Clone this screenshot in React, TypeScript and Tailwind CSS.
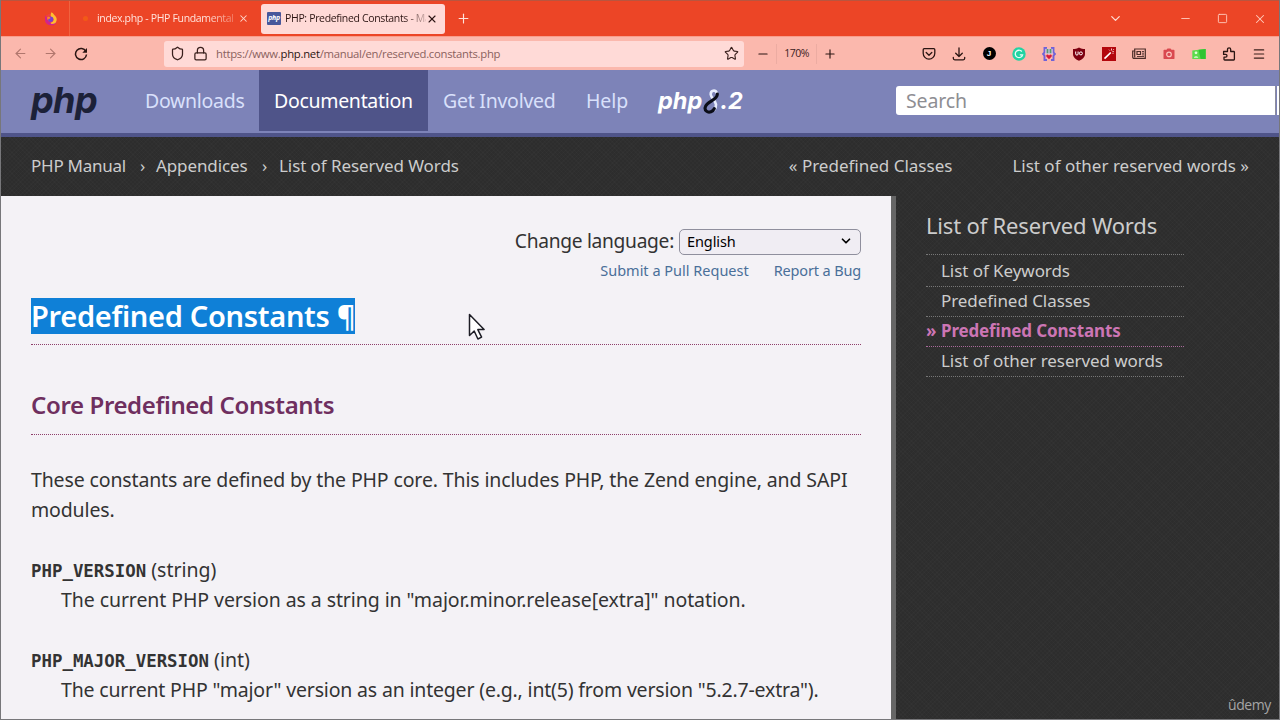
import type { ReactNode } from 'react';
import {
  ArrowLeft,
  ArrowRight,
  ChevronDown,
  Lock,
  Menu,
  Minus,
  Plus,
  Shield,
  Square,
  Star,
  X,
} from 'lucide-react';

const sidebarLinks = [
  { label: 'List of Keywords' },
  { label: 'Predefined Classes' },
  { label: 'Predefined Constants', current: true },
  { label: 'List of other reserved words' },
];

function FirefoxLogo() {
  return (
    <svg width="14" height="14" viewBox="0 0 14 14">
      <circle cx="7" cy="7.4" r="6" fill="#f0413f" />
      <path d="M1 7a6 6 0 0 0 11.6 2.4C10 12.5 3.5 11.5 3.3 5.5 2 5 1.3 4 2 2.5 1.2 4 .9 5.5 1 7z" fill="#d3238b" />
      <path d="M7.5.3C10 1.5 9.8 3 11 3.8c1.8 1.5 2.4 4.5.6 7C10 12.5 7 12 6.5 11 11 9.5 10 5 7 5c-.5-1.5-.3-3.5.5-4.7z" fill="#ffbd30" />
      <circle cx="6.6" cy="7.3" r="2.7" fill="#7a3fd0" />
      <path d="M3.3 5.3c1.2-.8 2.2-.5 3.3.6-.6.8-1.5.6-2 .9-.5.5-.3 1.2 0 1.7-1.2-.5-1.7-2-1.3-3.2z" fill="#ff8a1e" />
    </svg>
  );
}

function Reload() {
  return (
    <svg width="14" height="14" viewBox="0 0 14 14" fill="none" stroke="#2a1512" strokeWidth="1.5">
      <path d="M11.9 4.5A5.5 5.5 0 1 0 12.5 7.5" />
      <path d="M13 1v4.7H8.3z" fill="#2a1512" stroke="none" />
    </svg>
  );
}

function Pocket() {
  return (
    <svg width="14" height="14" viewBox="0 0 14 14" fill="none" stroke="#2a1512" strokeWidth="1.3" strokeLinecap="round" strokeLinejoin="round">
      <path d="M2.2 1.7h9.6c.6 0 1 .4 1 1v3.6a5.8 5.8 0 0 1-11.6 0V2.7c0-.6.4-1 1-1z" />
      <path d="M4.2 5.5 7 8.2l2.8-2.7" />
    </svg>
  );
}

function Download() {
  return (
    <svg width="14" height="14" viewBox="0 0 14 14" fill="none" stroke="#2a1512" strokeWidth="1.3" strokeLinecap="round" strokeLinejoin="round">
      <path d="M7 1v8.5M3.7 6.3 7 9.5l3.3-3.2M1.3 10.5v.8c0 .9.6 1.5 1.5 1.5h8.4c.9 0 1.5-.6 1.5-1.5v-.8" />
    </svg>
  );
}

function Grammarly() {
  return (
    <svg width="14" height="14" viewBox="0 0 14 14" fill="none">
      <circle cx="7" cy="7" r="6.7" fill="#22d3a3" />
      <path d="M9.8 4.5a3.7 3.7 0 1 0 .8 3.3H7.8" stroke="#e8fff8" strokeWidth="1.3" />
    </svg>
  );
}

function Braces() {
  return (
    <svg width="14" height="14" viewBox="0 0 14 14" fill="none">
      <path d="M5 1H2.5v4.3L1 7l1.5 1.7V13H5M9 1h2.5v4.3L13 7l-1.5 1.7V13H9" stroke="#6f62d8" strokeWidth="1.9" />
      <path d="M3.5 1.8h7v5h-7z" fill="#cfc4ee" />
      <path d="M4.6 2h1.8v4.2H4.6zM7.6 2h1.8v4.2H7.6z" fill="#5b9a6c" />
      <path d="M7 12.2 4.3 9.4V8l1.4-.5L7 8.5l1.3-1 1.4.5v1.4z" fill="#d31c3c" />
    </svg>
  );
}

function UBlock() {
  return (
    <svg width="14" height="14" viewBox="0 0 14 14" fill="none">
      <path d="M7 .4C5 1.7 3 2 1 2v5c0 3.5 3 5.5 6 6.8C10 12.5 13 10.500 13 7V2C11 2 9 1.7 7 .4z" fill="#7d0010" />
      <path d="M3.7 4.5v2.4a1.2 1.2 0 0 0 2.4 0V4.5" stroke="#fff" strokeWidth="1" />
      <circle cx="8.9" cy="6.4" r="1.5" stroke="#fff" strokeWidth="1" />
    </svg>
  );
}

function MagicWand() {
  return (
    <svg width="14" height="14" viewBox="0 0 14 14" fill="none">
      <path d="M0 0h14v14H0z" fill="#b3060c" />
      <path d="m2.500 11.700 6.300-6.200" stroke="#fff" strokeWidth="1.7" />
      <path d="M9.5 1.5v2M12 4.7h-1.7M7 2.7l.9.9M11.9 2.2l-1 1M11.5 7l-.9-.9" stroke="#ffd9d9" strokeWidth=".9" />
    </svg>
  );
}

function Reader() {
  return (
    <svg width="14" height="12" viewBox="0 0 14 12" fill="none" stroke="#4a2c29" strokeWidth="1.2">
      <path d="M2.7 1h10.600v9.400H2a1.300 1.300 0 0 1-1.300-1.300V3h2z" />
      <path d="M2.7 3v6.5M5 3.5h3.5v3H5z" />
      <path d="M10 3.5h2M10 5.2h2M10 6.9h2M5 8.5h7" strokeWidth=".9" />
    </svg>
  );
}

function Screenshot() {
  return (
    <svg width="12" height="12" viewBox="0 0 12 12" fill="none">
      <path d="M1.5 1.8h2L4.500.6h3l1 1.200h2c.6 0 1 .4 1 1v7.400c0 .5-.4.900-1 .9h-9c-.6 0-1-.4-1-.9V2.800c0-.6.4-1 1-1z" fill="#d9484f" />
      <circle cx="6" cy="6.4" r="2.3" stroke="#fbc5be" strokeWidth="1.2" />
    </svg>
  );
}

function GreenCard() {
  return (
    <svg width="14" height="12" viewBox="0 0 14 12">
      <path d="M.3 2.500 13.700 1v10H.3z" fill="#5cdb4c" />
      <path d="M6.500 1.800 13.700 1v10h-5z" fill="#2fc432" />
      <circle cx="4" cy="4.8" r="1.4" fill="#e2ffd9" />
      <path d="M1.800 10c.5-2.800 4-2.800 4.500 0z" fill="#c4f2b8" />
    </svg>
  );
}

function Extensions() {
  return (
    <svg width="14" height="14" viewBox="0 0 14 14" fill="none" stroke="#2a1512" strokeWidth="1.3" strokeLinejoin="round">
      <path d="M1.600 4.500h3.900V2.400a1.600 1.600 0 0 1 3.200 0v2.100h3c.4 0 .7.300.7.700v7.100c0 .4-.3.700-.7.700H2.700a.7.700 0 0 1-.7-.7v-2.100h1.600a1.400 1.400 0 0 0 0-2.800h-2z" />
    </svg>
  );
}

function PhpEight() {
  return (
    <svg width="18" height="26" viewBox="0 0 18 26" fill="none" strokeLinecap="round">
      <path d="M14.800 5C13.500 1.500 8.500 2 8.700 6.500 9 10 13.500 12 14 16.500c.2 2.500-.6 4-1.800 5.300" stroke="#e9eefe" strokeWidth="2.6" />
      <path d="M15.300 6c.5 6-10.300 7-12 13C2.200 22.500 5.500 25 9 23.700c1.800-.7 2.800-1.800 3.300-3" stroke="#0b0d18" strokeWidth="3.1" />
    </svg>
  );
}

function ToolbarItem({ children }: { children: ReactNode }) {
  return <div className="flex w-[30px] items-center justify-center">{children}</div>;
}

function TabBar() {
  return (
    <div className="flex h-[36px] shrink-0 items-center border-t border-[#b9553f] bg-[#ec4526] font-['Open_Sans','Noto_Sans',sans-serif] text-[10.5px]">
      <div className="flex h-full w-[69px] items-center justify-end border-r border-[#f0633f] pr-[11px]">
        <FirefoxLogo />
      </div>
      <div className="flex h-full w-[191px] items-center pl-[13px]">
        <span className="mr-[9px] h-[5px] w-[5px] rounded-full bg-[#f25a18]" />
        <span className="w-[137px] whitespace-nowrap tracking-[-0.34px] text-[#ffe3dc] [mask-image:linear-gradient(to_right,black_80%,#0005)]">
          index.php - PHP Fundamentals
        </span>
        <X className="ml-[4px]" size={11} strokeWidth={2.2} color="#ffd6cb" />
      </div>
      <div className="flex h-[30px] w-[184px] items-center rounded-[3px] bg-[#ffdad7] pl-[6px]">
        <span className="flex h-[13px] w-[14px] items-center justify-center rounded-[1px] bg-[#48579b] pb-[2px] text-[7px] font-bold italic leading-none tracking-[-0.4px] text-white">
          php
        </span>
        <span className="ml-[4px] w-[141px] whitespace-nowrap tracking-[-0.34px] text-[#2c1513] [mask-image:linear-gradient(to_right,black_84%,#0003)]">
          PHP: Predefined Constants - Ma
        </span>
        <X size={12} strokeWidth={2.2} color="#2c1513" />
      </div>
      <Plus className="ml-[11px]" size={15} strokeWidth={1.8} color="#ffe3dc" />
      <div className="ml-auto flex items-center pr-[12px]">
        <ChevronDown size={15} strokeWidth={2} color="#ffdcd3" />
        <Minus className="ml-[56px]" size={13} strokeWidth={1.7} color="#ffcabc" />
        <Square className="ml-[25px]" size={11} strokeWidth={2} color="#ffcabc" />
        <X className="ml-[25px]" size={14} strokeWidth={1.8} color="#ffcabc" />
      </div>
    </div>
  );
}

function Toolbar() {
  return (
    <div className="flex h-[34px] shrink-0 items-center border-t border-[#f99d8b] bg-[#fbb8ad] font-['Open_Sans','Noto_Sans',sans-serif]">
      <div className="flex w-[163px] items-center pl-[12px]">
        <ArrowLeft size={15} strokeWidth={1.7} color="#b0766d" />
        <ArrowRight className="ml-[15px]" size={15} strokeWidth={1.7} color="#b0766d" />
        <span className="ml-[16px]">
          <Reload />
        </span>
      </div>
      <div className="flex h-[26px] w-[580px] items-center rounded-[3px] bg-[#ffdad7] pl-[6px] pr-[5px]">
        <Shield size={15} strokeWidth={2} color="#3a201d" />
        <Lock className="ml-[8px]" size={15} strokeWidth={2} color="#3a201d" />
        <span className="ml-[8px] whitespace-nowrap pt-px text-[11.3px] tracking-[-0.27px] text-[#8a615d]">
          https://www.<span className="text-[#2a1512]">php.net</span>/manual/en/reserved.constants.php
        </span>
        <Star className="ml-auto" size={15} strokeWidth={1.8} color="#3a201d" />
      </div>
      <div className="flex items-center pl-[12px]">
        <Minus size={14} strokeWidth={2} color="#2a1512" />
        <div className="ml-[6px] flex h-[20px] w-[41px] items-center justify-center border-x border-[#ecaca2] text-[10.5px] tracking-[-0.5px] text-[#3a201d]">
          170%
        </div>
        <Plus className="ml-[6px]" size={14} strokeWidth={2} color="#2a1512" />
      </div>
      <div className="ml-auto flex pr-[5px]">
        <ToolbarItem><Pocket /></ToolbarItem>
        <ToolbarItem><Download /></ToolbarItem>
        <ToolbarItem>
          <span className="flex h-[13px] w-[13px] items-center justify-center rounded-full bg-black font-['Liberation_Sans',sans-serif] text-[8px] font-bold leading-none text-white">J</span>
        </ToolbarItem>
        <ToolbarItem><Grammarly /></ToolbarItem>
        <ToolbarItem><Braces /></ToolbarItem>
        <ToolbarItem><UBlock /></ToolbarItem>
        <ToolbarItem><MagicWand /></ToolbarItem>
        <ToolbarItem><Reader /></ToolbarItem>
        <ToolbarItem><Screenshot /></ToolbarItem>
        <ToolbarItem><GreenCard /></ToolbarItem>
        <ToolbarItem><Extensions /></ToolbarItem>
        <ToolbarItem><Menu size={14} strokeWidth={2} color="#3a201d" /></ToolbarItem>
      </div>
    </div>
  );
}

function SiteHeader() {
  return (
    <header className="flex h-[67px] shrink-0 border-b-[4px] border-[#4f5489] bg-[#7d83b8] text-[19.5px] text-[#d9e0fb]">
      <div className="flex h-[59px] w-[128px] items-center pl-[30px] font-['Inter',sans-serif] text-[36px] font-bold italic leading-none tracking-[-0.6px] text-[#1c2138]">
        php
      </div>
      <nav className="flex h-[61px] items-center whitespace-nowrap">
        <a className="w-[130px] pl-[16px] tracking-[-0.3px]">Downloads</a>
        <a className="flex h-full w-[169px] items-center bg-[#4f5489] pl-[15px] tracking-[-0.3px] text-white">Documentation</a>
        <a className="w-[143px] pl-[15px] tracking-[-0.25px]">Get Involved</a>
        <a className="w-[87px] pl-[15px] tracking-[-0.1px]">Help</a>
        <a className="flex items-center pt-px font-['Inter',sans-serif] text-[23.5px] font-bold italic text-white">
          <span>php</span>
          <PhpEight />
          <span>.2</span>
        </a>
      </nav>
      <div className="ml-auto flex items-start pt-[16px]">
        <div className="flex h-[29px] w-[380px] items-center rounded-l-[3px] border-r border-[#8d8d9c] bg-white pl-[10px] tracking-[-0.15px] text-[#8e8e93]">Search</div>
        <div className="ml-px h-[29px] w-[2px] bg-white" />
      </div>
    </header>
  );
}

function Breadcrumbs() {
  return (
    <div className="flex h-[59px] shrink-0 items-center whitespace-nowrap px-[30px] pb-[2px] text-[17px] text-[#cccccc]">
      <span className="w-[95px] tracking-[-0.25px]">PHP Manual</span>
      <span className="w-[30px] pl-[14px]">›</span>
      <span className="w-[92px] tracking-[-0.1px]">Appendices</span>
      <span className="w-[31px] pl-[14px]">›</span>
      <span className="tracking-[-0.08px]">List of Reserved Words</span>
      <span className="ml-auto">« Predefined Classes</span>
      <span className="ml-[60px]">List of other reserved words »</span>
    </div>
  );
}

function Manual() {
  return (
    <main className="w-[890px] shrink-0 bg-[#f4f2f6] px-[30px] pt-[30px] text-[19.5px] leading-[30px] text-[#333333]">
      <div className="flex h-[30px] items-center justify-end">
        <span className="pb-px text-[19.2px] tracking-[-0.3px]">Change language:</span>
        <div className="ml-[5px] mt-[2px] flex h-[26px] w-[182px] items-center justify-between rounded-[5px] border border-[#8f8f9d] bg-[#f0edf3] px-[7px] pb-[2px] text-[14.5px] tracking-[-0.1px] text-black">
          English
          <ChevronDown size={14} strokeWidth={3} />
        </div>
      </div>
      <div className="flex h-[30px] items-center justify-end gap-[25px] pb-[2px] text-[14.5px] text-[#4a6f99]">
        <a>Submit a Pull Request</a>
        <a className="tracking-[-0.15px]">Report a Bug</a>
      </div>
      <h1 className="mt-[12px] flex h-[47px] items-start border-b border-dotted border-[#8f3f6b] text-[29px] font-semibold leading-[36px] tracking-[-0.3px] text-white">
        <span className="bg-[#0f80d7]">Predefined Constants ¶</span>
      </h1>
      <h2 className="mt-[45px] flex h-[45px] items-start border-b border-dotted border-[#8f3f6b] text-[24px] font-semibold tracking-[-0.37px] text-[#6f2f5f]">
        Core Predefined Constants
      </h2>
      <p className="mt-[30px] whitespace-nowrap tracking-[-0.135px]">
        These constants are defined by the PHP core. This includes PHP, the Zend engine, and SAPI
        <br />
        modules.
      </p>
      <dl className="whitespace-nowrap">
        <dt className="mt-[30px] h-[30px]">
          <strong className="font-['DejaVu_Sans_Mono',monospace] text-[17.4px]">PHP_VERSION</strong> (string)
        </dt>
        <dd className="pl-[30px] tracking-[-0.08px]">
          The current PHP version as a string in "major.minor.release[extra]" notation.
        </dd>
        <dt className="mt-[30px] h-[30px]">
          <strong className="font-['DejaVu_Sans_Mono',monospace] text-[17.4px]">PHP_MAJOR_VERSION</strong> (int)
        </dt>
        <dd className="pl-[30px] tracking-[-0.18px]">
          The current PHP "major" version as an integer (e.g., int(5) from version "5.2.7-extra").
        </dd>
      </dl>
    </main>
  );
}

function Sidebar() {
  return (
    <aside className="flex-1 border-l-[5px] border-[#666666] pl-[30px] pt-[14px] text-[#cccccc]">
      <h3 className="text-[22px] leading-[30px] tracking-[-0.18px]">List of Reserved Words</h3>
      <ul className="mt-[14px] w-[258px] border-t border-dotted border-[#777777] pt-[2px] text-[17px]">
        {sidebarLinks.map((link) => (
          <li
            key={link.label}
            className={
              link.current
                ? 'flex h-[30px] items-center border-b border-dotted border-[#a86a9a] pb-[2px] font-bold tracking-[-0.15px] text-[#cc75b4]'
                : 'flex h-[30px] items-center border-b border-dotted border-[#777777] pb-[2px] tracking-[-0.06px]'
            }
          >
            <span className="w-[15px] shrink-0">{link.current && '»'}</span>
            <span className="whitespace-nowrap">{link.label}</span>
          </li>
        ))}
      </ul>
    </aside>
  );
}

export default function App() {
  return (
    <div className="relative flex h-[720px] w-[1280px] flex-col overflow-hidden border-x border-b border-[#77777a] bg-[#2f2f2f] font-['Noto_Sans',sans-serif]">
      <TabBar />
      <Toolbar />
      <SiteHeader />
      <div className="flex min-h-0 flex-1 flex-col bg-[#2d2d2d] bg-[repeating-linear-gradient(45deg,#ffffff04_0_1px,transparent_1px_3px),repeating-linear-gradient(-45deg,#ffffff04_0_1px,transparent_1px_3px)]">
        <Breadcrumbs />
        <div className="flex min-h-0 flex-1">
          <Manual />
          <Sidebar />
        </div>
      </div>
      {/* mouse pointer */}
      <svg className="absolute left-[467px] top-[313px]" width="19" height="29" viewBox="0 0 19 29">
        <path d="M1.5 1.5v21l4.7-4.5 3.7 8 3.7-1.8-3.8-7.6h6.300z" fill="#fff" stroke="#1d1d25" strokeWidth="1.5" strokeLinejoin="round" />
      </svg>
      <div className="absolute bottom-[4px] right-[8px] font-['Open_Sans',sans-serif] text-[14px] font-medium leading-[20px] tracking-[-0.4px] text-[#a5a5a5]">
        ûdemy
      </div>
    </div>
  );
}
